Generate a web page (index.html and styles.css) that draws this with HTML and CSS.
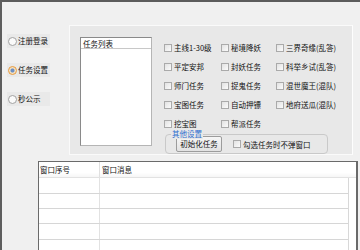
FILE: index.html
```html
<!DOCTYPE html>
<html>
<head>
<meta charset="utf-8">
<link rel="stylesheet" href="styles.css">
</head>
<body>
<div class="window">
  <div class="upper">
    <div class="sidebar">
      <div class="radio"><span class="dot"></span><span>注册登录</span></div>
      <div class="radio"><span class="dot on"></span><span>任务设置</span></div>
      <div class="radio"><span class="dot"></span><span>秒公示</span></div>
    </div>
    <div class="panel">
      <div class="listbox">
        <div class="lb-head">任务列表</div>
      </div>
      <div class="right">
        <div class="checks">
          <div class="chk"><span class="box"></span>主线1-30级</div>
          <div class="chk"><span class="box"></span>秘境降妖</div>
          <div class="chk"><span class="box"></span>三界奇缘(乱答)</div>
          <div class="chk"><span class="box"></span>平定安邦</div>
          <div class="chk"><span class="box"></span>封妖任务</div>
          <div class="chk"><span class="box"></span>科举乡试(乱答)</div>
          <div class="chk"><span class="box"></span>师门任务</div>
          <div class="chk"><span class="box"></span>捉鬼任务</div>
          <div class="chk"><span class="box"></span>混世魔王(混队)</div>
          <div class="chk"><span class="box"></span>宝图任务</div>
          <div class="chk"><span class="box"></span>自动押镖</div>
          <div class="chk"><span class="box"></span>地府送瓜(混队)</div>
          <div class="chk"><span class="box"></span>挖宝图</div>
          <div class="chk"><span class="box"></span>帮派任务</div>
        </div>
        <div class="group">
          <span class="legend">其他设置</span>
          <div class="btn">初始化任务</div>
          <div class="chk wide"><span class="box"></span>勾选任务时不弹窗口</div>
        </div>
      </div>
    </div>
  </div>
  <div class="table">
    <div class="thead">
      <div class="c1">窗口序号</div>
      <div class="c2">窗口消息</div>
    </div>
    <div class="rows">
      <div class="row h17"><div class="c1"></div><div class="c2"></div></div>
      <div class="row h15"><div class="c1"></div><div class="c2"></div></div>
      <div class="row h15"><div class="c1"></div><div class="c2"></div></div>
      <div class="row h16"><div class="c1"></div><div class="c2"></div></div>
      <div class="row h16"><div class="c1"></div><div class="c2"></div></div>
    </div>
  </div>
</div>
</body>
</html>
```
FILE: styles.css
```css
html, body {
  margin: 0;
  padding: 0;
}
body {
  width: 360px;
  height: 250px;
  overflow: hidden;
  background: #f0f0f0;
  font-family: "Noto Sans CJK SC", "Noto Sans", sans-serif;
  font-size: 7.5px;
  color: #111;
}
.window {
  height: 250px;
  box-sizing: border-box;
  border-top: 2px solid #5c5c5c;
  border-left: 2px solid #5e5e5e;
}
.upper {
  display: flex;
  height: 157px;
}
.sidebar {
  width: 67px;
  display: flex;
  flex-direction: column;
  gap: 15px;
  padding-top: 32px;
  box-sizing: border-box;
}
.radio {
  margin-left: 5px;
  width: 43px;
  height: 14px;
  background: #e9e9e9;
  display: flex;
  align-items: center;
  gap: 1px;
  line-height: 14px;
}
.dot {
  width: 7px;
  height: 7px;
  border-radius: 50%;
  border: 1px solid #a2a2a2;
  background: #fafafa;
  box-sizing: content-box;
  margin-left: 1px;
}
.dot.on {
  border-color: #e89a3c;
  background: radial-gradient(circle, #6c8fc4 0 1.5px, #f4e2c4 2.5px);
}
.panel {
  margin-top: 23px;
  width: 284px;
  height: 130px;
  box-sizing: border-box;
  background: #e8e8e8;
  border: 1px solid #fafafa;
  border-right-color: #fdfdfd;
  display: flex;
  overflow: hidden;
}
.listbox {
  margin: 11px 0 0 10px;
  width: 72px;
  height: 109px;
  box-sizing: border-box;
  background: #fff;
  border: 1px solid #8a8a8a;
  border-right-color: #b5b5b5;
  border-bottom-color: #b5b5b5;
}
.lb-head {
  height: 10px;
  line-height: 11px;
  padding-left: 2px;
  border-bottom: 1px solid #c8c8c8;
}
.right {
  margin-left: 12px;
  display: flex;
  flex-direction: column;
}
.checks {
  margin-top: 12px;
  display: grid;
  grid-template-columns: 57px 55px 60px;
  grid-auto-rows: 19px;
}
.chk {
  display: flex;
  align-items: center;
  white-space: nowrap;
}
.box {
  width: 6px;
  height: 6px;
  border: 1px solid #aaaaaa;
  background: linear-gradient(135deg, #e2e2e2, #fbfbfb);
  margin-right: 2px;
}
.group {
  margin: 1px 0 0 1px;
  width: 163px;
  height: 40px;
  box-sizing: border-box;
  border: 1px solid #c9c9c9;
  border-radius: 4px;
  position: relative;
  display: flex;
  align-items: flex-start;
  padding: 1px 0 0 10px;
}
.legend {
  position: absolute;
  top: -6px;
  left: 5px;
  padding: 0 1px;
  background: #e8e8e8;
  color: #2f6fcf;
  line-height: 10px;
}
.btn {
  width: 46px;
  height: 16px;
  box-sizing: border-box;
  border: 1px solid #9c9c9c;
  border-radius: 2px;
  background: linear-gradient(#f6f6f6, #e2e2e2);
  text-align: center;
  line-height: 14px;
}
.chk.wide {
  margin-left: 11px;
  height: 16px;
}
.table {
  margin-left: 36px;
  margin-top: 2px;
  width: 320px;
  height: 100px;
  box-sizing: border-box;
  background: #fff;
  border-top: 1px solid #6a6a6a;
  border-left: 1px solid #6a6a6a;
  border-right: 2px solid #6a6a6a;
}
.thead {
  display: flex;
  height: 15px;
  line-height: 15px;
  border-bottom: 1px solid #e2e2e2;
  background: linear-gradient(#fff 70%, #f6f6f6);
}
.thead .c1 {
  width: 61px;
  padding-left: 1px;
  box-sizing: border-box;
  border-right: 1px solid #e0e0e0;
}
.thead .c2 {
  padding-left: 2px;
}
.rows {
  width: 309px;
  border-right: 1px solid #d8d8d8;
}
.row {
  display: flex;
  box-sizing: border-box;
  border-bottom: 1px solid #d6d6d6;
}
.row .c1 {
  width: 61px;
  box-sizing: border-box;
  border-right: 1px solid #e2e2e2;
}
.h17 { height: 16px; }
.h15 { height: 15px; }
.h16 { height: 16px; }
```
